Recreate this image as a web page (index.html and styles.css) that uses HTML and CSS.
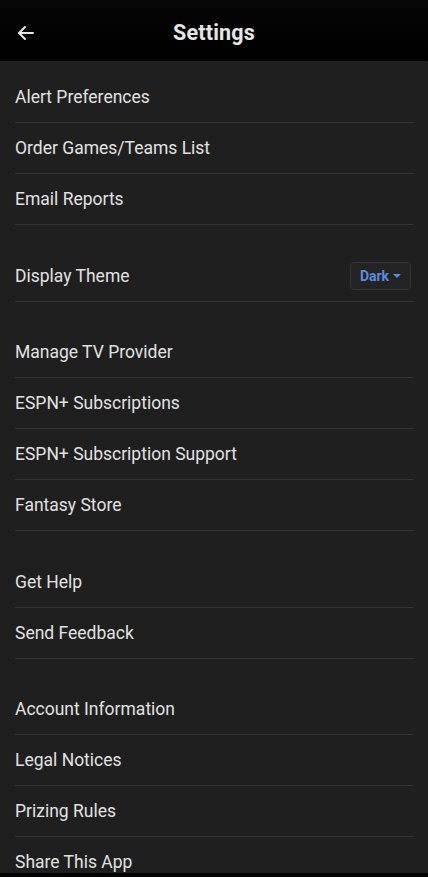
FILE: index.html
```html
<!DOCTYPE html>
<html lang="en">
<head>
    <meta charset="UTF-8">
    <meta name="viewport" content="width=device-width, initial-scale=1.0">
    <title>Settings</title>
    <link rel="stylesheet" href="styles.css">
</head>
<body>
    <div class="app">
        <header class="topbar">
            <button class="back-btn" type="button" aria-label="Back">
                <svg width="20" height="20" viewBox="0 0 20 20" fill="none" stroke="#e8e8e8" stroke-width="2" stroke-linecap="round" stroke-linejoin="round">
                    <path d="M17 10H3"/>
                    <path d="M9 4l-6 6 6 6"/>
                </svg>
            </button>
            <h1>Settings</h1>
        </header>

        <main class="settings-list">
            <section class="group">
                <div class="row">Alert Preferences</div>
                <div class="row">Order Games/Teams List</div>
                <div class="row">Email Reports</div>
            </section>

            <section class="group">
                <div class="row">
                    <span>Display Theme</span>
                    <div class="theme-select">
                        Dark
                        <span class="caret"></span>
                    </div>
                </div>
            </section>

            <section class="group">
                <div class="row">Manage TV Provider</div>
                <div class="row">ESPN+ Subscriptions</div>
                <div class="row">ESPN+ Subscription Support</div>
                <div class="row">Fantasy Store</div>
            </section>

            <section class="group">
                <div class="row">Get Help</div>
                <div class="row">Send Feedback</div>
            </section>

            <section class="group">
                <div class="row">Account Information</div>
                <div class="row">Legal Notices</div>
                <div class="row">Prizing Rules</div>
                <div class="row">Share This App</div>
            </section>
        </main>

        <div class="nav-strip"></div>
    </div>
</body>
</html>
```

FILE: styles.css
```css
* {
    margin: 0;
    padding: 0;
    box-sizing: border-box;
}

body {
    background-color: #1f1f1f;
    font-family: Roboto, 'Liberation Sans', sans-serif;
    color: #e4e4e4;
    height: 877px;
    overflow: hidden;
}

.app {
    height: 877px;
    display: flex;
    flex-direction: column;
    position: relative;
    overflow: hidden;
}

.topbar {
    height: 61px;
    flex-shrink: 0;
    background: linear-gradient(#050505, #000);
    display: flex;
    align-items: center;
    justify-content: center;
    position: relative;
}

.topbar h1 {
    font-size: 21.5px;
    font-weight: 700;
    color: #e6e6e6;
    letter-spacing: 0.2px;
    margin-top: 4px;
}

.back-btn {
    position: absolute;
    left: 15px;
    top: 22px;
    background: none;
    border: none;
    width: 22px;
    height: 22px;
    display: flex;
    align-items: center;
    justify-content: center;
}

.settings-list {
    flex: 1;
    padding: 11px 15px 0;
    display: flex;
    flex-direction: column;
    gap: 25.5px;
}

.row {
    height: 51px;
    border-bottom: 1px solid #353535;
    display: flex;
    align-items: center;
    justify-content: space-between;
    font-size: 17.5px;
    color: #e2e2e2;
}

.theme-select {
    height: 28px;
    width: 61px;
    border: 1px solid #343434;
    border-radius: 4px;
    background-color: #232323;
    color: #5b8ce0;
    font-size: 14px;
    font-weight: 700;
    display: flex;
    align-items: center;
    justify-content: center;
    gap: 4px;
    margin-right: 2px;
}

.caret {
    width: 0;
    height: 0;
    border-left: 4px solid transparent;
    border-right: 4px solid transparent;
    border-top: 4px solid #5b8ce0;
}

.nav-strip {
    position: absolute;
    left: 0;
    right: 0;
    bottom: 0;
    height: 4px;
    background-color: #000;
}
```
